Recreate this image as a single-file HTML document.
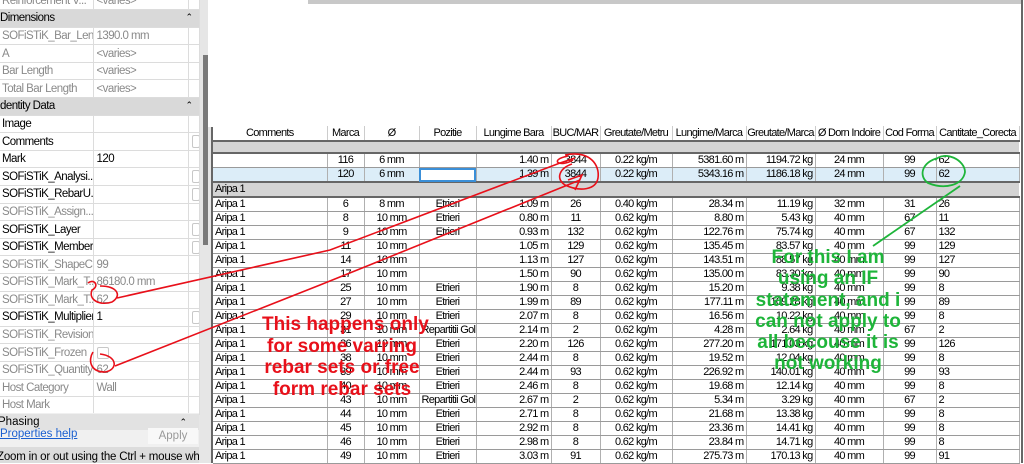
<!DOCTYPE html>
<html><head><meta charset="utf-8">
<style>
*{margin:0;padding:0;box-sizing:border-box}
body{width:1024px;height:463px;overflow:hidden;background:#fff;position:relative;font-family:"Liberation Sans",Arial,sans-serif}
.lp{position:absolute;left:0;top:-8px;width:199px;border-collapse:collapse;table-layout:fixed;font-size:11.5px;letter-spacing:-0.55px}
.lp td{height:17.6px;border-bottom:1px solid #dcdcdc;border-right:1px solid #dcdcdc;padding-left:3px;white-space:nowrap;overflow:hidden;background:#fff;color:#000}
.lp td:first-child{padding-left:2px}
.lp td.g{color:#8a8a8a}
.lp tr.h td{background:#d9d9d9;padding-left:0;position:relative}
.cb{display:inline-block;width:8px;height:13px;border:1px solid #c8c8c8;border-radius:2px;vertical-align:middle}
.st{position:absolute;left:0;top:126px;width:806px;margin-left:213px;border-collapse:collapse;table-layout:fixed;font-size:11px;letter-spacing:-0.7px}
.st td{height:14px;line-height:13px;border-bottom:1px solid #9a9a9a;border-right:1px solid #b0b0b0;padding:0 2px;white-space:nowrap;overflow:hidden;text-align:center}
.st tr.hd td{height:15px;border-bottom:2px solid #666;border-right:1px solid #ccc;padding:0}
.st tr.gb td{height:12px;background:#d4d4d4;border-bottom:2px solid #666;border-right:none}
.st tr.ag td{background:#d4d4d4;border-top:2px solid #666;border-bottom:2px solid #666;text-align:left;border-right:none}
.st tr.sel td{background:#dcedf8}
.l{text-align:left!important}.r{text-align:right!important}
.red{position:absolute;color:#e8101a;font-weight:bold;font-size:19px;text-align:center;line-height:21.5px;white-space:nowrap}
.grn{position:absolute;color:#1eb53a;font-weight:bold;font-size:19px;text-align:center;line-height:21.3px;white-space:nowrap}
</style></head><body>
<div style="position:absolute;left:308px;top:0;width:714px;height:4px;background:#c8c8c8"></div>
<div style="position:absolute;left:1021px;top:0;width:2px;height:463px;background:#666"></div>
<div style="position:absolute;left:199px;top:0;width:14px;height:463px;background:#e6e6e6"></div>
<div style="position:absolute;left:203px;top:55px;width:5px;height:190px;background:#7a7a7a"></div>
<div style="position:absolute;left:208px;top:0;width:5px;height:127px;background:#fff"></div>
<div style="position:absolute;left:211px;top:127px;width:2px;height:336px;background:#666"></div>

<table class="lp">
<col style="width:93px"><col style="width:95px"><col style="width:11px">
<tr><td class="g">Reinforcement V...</td><td class="g">&lt;varies&gt;</td><td></td></tr>
<tr class="h"><td colspan="3">Dimensions<span style="position:absolute;right:6px;top:2px;font-size:9px">&#8963;</span></td></tr>
<tr><td class="g">SOFiSTiK_Bar_Len...</td><td class="g">1390.0 mm</td><td></td></tr>
<tr><td class="g">A</td><td class="g">&lt;varies&gt;</td><td></td></tr>
<tr><td class="g">Bar Length</td><td class="g">&lt;varies&gt;</td><td></td></tr>
<tr><td class="g">Total Bar Length</td><td class="g">&lt;varies&gt;</td><td></td></tr>
<tr class="h"><td colspan="3">dentity Data<span style="position:absolute;right:6px;top:2px;font-size:9px">&#8963;</span></td></tr>
<tr><td>Image</td><td></td><td></td></tr>
<tr><td>Comments</td><td></td><td><span class="cb"></span></td></tr>
<tr><td>Mark</td><td>120</td><td></td></tr>
<tr><td>SOFiSTiK_Analysi...</td><td></td><td><span class="cb"></span></td></tr>
<tr><td>SOFiSTiK_RebarU...</td><td></td><td><span class="cb"></span></td></tr>
<tr><td class="g">SOFiSTiK_Assign...</td><td></td><td></td></tr>
<tr><td>SOFiSTiK_Layer</td><td></td><td><span class="cb"></span></td></tr>
<tr><td>SOFiSTiK_Member</td><td></td><td><span class="cb"></span></td></tr>
<tr><td class="g">SOFiSTiK_ShapeC...</td><td class="g">99</td><td></td></tr>
<tr><td class="g">SOFiSTiK_Mark_T...</td><td class="g">86180.0 mm</td><td></td></tr>
<tr><td class="g">SOFiSTiK_Mark_T...</td><td class="g">62</td><td></td></tr>
<tr><td>SOFiSTiK_Multiplier</td><td>1</td><td><span class="cb"></span></td></tr>
<tr><td class="g">SOFiSTiK_Revision</td><td></td><td></td></tr>
<tr><td class="g">SOFiSTiK_Frozen</td><td><span class="cb" style="width:12px;height:12px"></span></td><td></td></tr>
<tr><td class="g">SOFiSTiK_Quantity</td><td class="g">62</td><td></td></tr>
<tr><td class="g">Host Category</td><td class="g">Wall</td><td></td></tr>
<tr><td class="g">Host Mark</td><td></td><td></td></tr>
</table>
<div style="position:absolute;left:0;top:413px;width:199px;height:50px;background:#f0f0f0"></div>
<div style="position:absolute;left:-2px;top:414px;width:201px;height:16px;background:#e2e2e2;font-size:11.5px;line-height:16px">Phasing<span style="position:absolute;right:12px;font-size:9px">&#8963;</span></div>
<div style="position:absolute;left:0;top:428px;font-size:11.5px;color:#1a5fd0;text-decoration:underline">Properties help</div>
<div style="position:absolute;left:148px;top:428px;width:50px;height:16px;background:#f8f8f8;color:#999;font-size:11.5px;line-height:16px;text-align:center">Apply</div>
<div style="position:absolute;left:0;top:447px;width:199px;height:16px;background:#dcdcdc"></div>
<div style="position:absolute;left:-3px;top:451px;font-size:11.5px;letter-spacing:-0.2px;white-space:nowrap;width:202px;overflow:hidden">Zoom in or out using the Ctrl + mouse wheel c</div>

<table class="st">
<col style="width:114px"><col style="width:37px"><col style="width:55px"><col style="width:57px"><col style="width:75px"><col style="width:49px"><col style="width:72px"><col style="width:74px"><col style="width:69px"><col style="width:68px"><col style="width:53px"><col style="width:83px">
<tr class="hd"><td>Comments</td><td>Marca</td><td>Ø</td><td>Pozitie</td><td>Lungime Bara</td><td>BUC/MAR</td><td>Greutate/Metru</td><td>Lungime/Marca</td><td>Greutate/Marca</td><td>Ø Dorn Indoire</td><td>Cod Forma</td><td>Cantitate_Corecta</td></tr>
<tr class="gb"><td colspan="12"></td></tr>
<tr><td></td><td>116</td><td>6 mm</td><td></td><td class="r">1.40 m</td><td>3844</td><td>0.22 kg/m</td><td class="r">5381.60 m</td><td class="r">1194.72 kg</td><td>24 mm</td><td>99</td><td class="l">62</td></tr>
<tr class="sel"><td></td><td>120</td><td>6 mm</td><td style="background:#fff;outline:2px solid #3a8fd8;outline-offset:-2px"></td><td class="r">1.39 m</td><td>3844</td><td>0.22 kg/m</td><td class="r">5343.16 m</td><td class="r">1186.18 kg</td><td>24 mm</td><td>99</td><td class="l">62</td></tr>
<tr class="ag"><td colspan="12">Aripa 1</td></tr>
<tr><td class="l">Aripa 1</td><td>6</td><td>8 mm</td><td>Etrieri</td><td class="r">1.09 m</td><td>26</td><td>0.40 kg/m</td><td class="r">28.34 m</td><td class="r">11.19 kg</td><td>32 mm</td><td>31</td><td class="l">26</td></tr>
<tr><td class="l">Aripa 1</td><td>8</td><td>10 mm</td><td>Etrieri</td><td class="r">0.80 m</td><td>11</td><td>0.62 kg/m</td><td class="r">8.80 m</td><td class="r">5.43 kg</td><td>40 mm</td><td>67</td><td class="l">11</td></tr>
<tr><td class="l">Aripa 1</td><td>9</td><td>10 mm</td><td>Etrieri</td><td class="r">0.93 m</td><td>132</td><td>0.62 kg/m</td><td class="r">122.76 m</td><td class="r">75.74 kg</td><td>40 mm</td><td>67</td><td class="l">132</td></tr>
<tr><td class="l">Aripa 1</td><td>11</td><td>10 mm</td><td></td><td class="r">1.05 m</td><td>129</td><td>0.62 kg/m</td><td class="r">135.45 m</td><td class="r">83.57 kg</td><td>40 mm</td><td>99</td><td class="l">129</td></tr>
<tr><td class="l">Aripa 1</td><td>14</td><td>10 mm</td><td></td><td class="r">1.13 m</td><td>127</td><td>0.62 kg/m</td><td class="r">143.51 m</td><td class="r">88.57 kg</td><td>40 mm</td><td>99</td><td class="l">127</td></tr>
<tr><td class="l">Aripa 1</td><td>17</td><td>10 mm</td><td></td><td class="r">1.50 m</td><td>90</td><td>0.62 kg/m</td><td class="r">135.00 m</td><td class="r">83.30 kg</td><td>40 mm</td><td>99</td><td class="l">90</td></tr>
<tr><td class="l">Aripa 1</td><td>25</td><td>10 mm</td><td>Etrieri</td><td class="r">1.90 m</td><td>8</td><td>0.62 kg/m</td><td class="r">15.20 m</td><td class="r">9.38 kg</td><td>40 mm</td><td>99</td><td class="l">8</td></tr>
<tr><td class="l">Aripa 1</td><td>27</td><td>10 mm</td><td>Etrieri</td><td class="r">1.99 m</td><td>89</td><td>0.62 kg/m</td><td class="r">177.11 m</td><td class="r">109.28 kg</td><td>40 mm</td><td>99</td><td class="l">89</td></tr>
<tr><td class="l">Aripa 1</td><td>29</td><td>10 mm</td><td>Etrieri</td><td class="r">2.07 m</td><td>8</td><td>0.62 kg/m</td><td class="r">16.56 m</td><td class="r">10.22 kg</td><td>40 mm</td><td>99</td><td class="l">8</td></tr>
<tr><td class="l">Aripa 1</td><td>31</td><td>10 mm</td><td>Repartitii Gol</td><td class="r">2.14 m</td><td>2</td><td>0.62 kg/m</td><td class="r">4.28 m</td><td class="r">2.64 kg</td><td>40 mm</td><td>67</td><td class="l">2</td></tr>
<tr><td class="l">Aripa 1</td><td>36</td><td>10 mm</td><td>Etrieri</td><td class="r">2.20 m</td><td>126</td><td>0.62 kg/m</td><td class="r">277.20 m</td><td class="r">171.03 kg</td><td>40 mm</td><td>99</td><td class="l">126</td></tr>
<tr><td class="l">Aripa 1</td><td>38</td><td>10 mm</td><td>Etrieri</td><td class="r">2.44 m</td><td>8</td><td>0.62 kg/m</td><td class="r">19.52 m</td><td class="r">12.04 kg</td><td>40 mm</td><td>99</td><td class="l">8</td></tr>
<tr><td class="l">Aripa 1</td><td>39</td><td>10 mm</td><td>Etrieri</td><td class="r">2.44 m</td><td>93</td><td>0.62 kg/m</td><td class="r">226.92 m</td><td class="r">140.01 kg</td><td>40 mm</td><td>99</td><td class="l">93</td></tr>
<tr><td class="l">Aripa 1</td><td>40</td><td>10 mm</td><td>Etrieri</td><td class="r">2.46 m</td><td>8</td><td>0.62 kg/m</td><td class="r">19.68 m</td><td class="r">12.14 kg</td><td>40 mm</td><td>99</td><td class="l">8</td></tr>
<tr><td class="l">Aripa 1</td><td>43</td><td>10 mm</td><td>Repartitii Gol</td><td class="r">2.67 m</td><td>2</td><td>0.62 kg/m</td><td class="r">5.34 m</td><td class="r">3.29 kg</td><td>40 mm</td><td>67</td><td class="l">2</td></tr>
<tr><td class="l">Aripa 1</td><td>44</td><td>10 mm</td><td>Etrieri</td><td class="r">2.71 m</td><td>8</td><td>0.62 kg/m</td><td class="r">21.68 m</td><td class="r">13.38 kg</td><td>40 mm</td><td>99</td><td class="l">8</td></tr>
<tr><td class="l">Aripa 1</td><td>45</td><td>10 mm</td><td>Etrieri</td><td class="r">2.92 m</td><td>8</td><td>0.62 kg/m</td><td class="r">23.36 m</td><td class="r">14.41 kg</td><td>40 mm</td><td>99</td><td class="l">8</td></tr>
<tr><td class="l">Aripa 1</td><td>46</td><td>10 mm</td><td>Etrieri</td><td class="r">2.98 m</td><td>8</td><td>0.62 kg/m</td><td class="r">23.84 m</td><td class="r">14.71 kg</td><td>40 mm</td><td>99</td><td class="l">8</td></tr>
<tr><td class="l">Aripa 1</td><td>49</td><td>10 mm</td><td>Etrieri</td><td class="r">3.03 m</td><td>91</td><td>0.62 kg/m</td><td class="r">275.73 m</td><td class="r">170.13 kg</td><td>40 mm</td><td>99</td><td class="l">91</td></tr>
</table>

<svg style="position:absolute;left:0;top:0" width="1024" height="463" fill="none">
<g stroke="#e8101a" stroke-width="1.6">
<path d="M88 283 C 94 278, 100 286, 92 290 C 88 300, 100 306, 112 302 C 122 296, 118 286, 100 286"/>
<path d="M117 298 L 330 250 L 560 163 L 575 158"/>
<path d="M568 156 C 548 160, 560 168, 573 160"/>
<path d="M93 352 C 88 360, 90 372, 105 372 C 118 370, 118 356, 100 354"/>
<path d="M115 366 L 320 285 L 580 180"/>
<path d="M565 155 C 590 150, 600 165, 598 178 C 596 190, 580 192, 565 185 C 555 178, 560 168, 572 164"/>
<path d="M568 180 L 582 175 L 575 190"/>
</g>
<g stroke="#1eb53a" stroke-width="1.8">
<path d="M935 160 C 945 150, 965 160, 965 172 C 963 185, 945 190, 928 183 C 918 176, 922 162, 938 158"/>
<path d="M960 186 L 873 246"/>
</g>
</svg>
<div class="red" style="left:262px;top:314px;width:160px">This happens only<br>for some varring<br>rebar sets or free<br>form rebar sets</div>
<div class="grn" style="left:750px;top:247px;width:156px">For this I am<br>using an IF<br>statement, and i<br>can not apply to<br>all becouse it is<br>not working</div>
</body></html>
